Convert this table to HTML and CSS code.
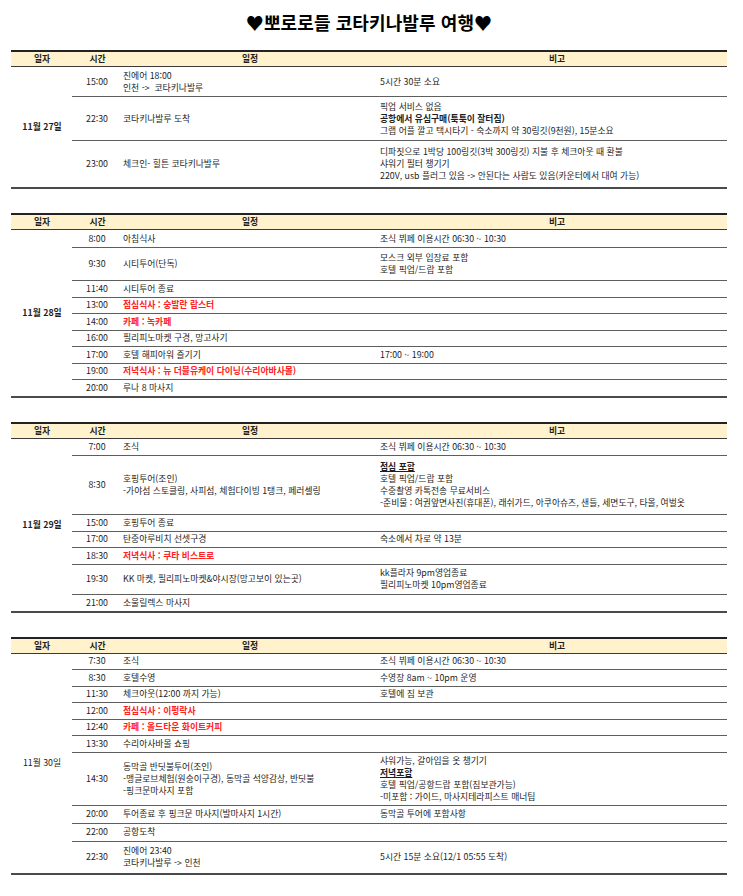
FILE: index.html
```html
<!DOCTYPE html>
<html lang="ko">
<head>
<meta charset="utf-8">
<title>뽀로로들 코타키나발루 여행</title>
<link rel="stylesheet" href="styles.css">
</head>
<body>
<div class="page">
  <h1 class="title">♥뽀로로들 코타키나발루 여행♥</h1>

  <section class="day">
    <div class="head"><div>일자</div><div>시간</div><div>일정</div><div class="hn">비고</div></div>
    <div class="body">
      <div class="date">11월 27일</div>
      <div class="rows">
        <div class="row h30"><div class="t">15:00</div><div class="s">진에어 18:00<br>인천 -&gt;&nbsp; 코타키나발루</div><div class="n">5시간 30분 소요</div></div>
        <div class="row h44"><div class="t">22:30</div><div class="s">코타키나발루 도착</div><div class="n">픽업 서비스 없음<br><b>공항에서 유심구매(툭툭이 잘터짐)</b><br>그랩 어플 깔고 택시타기 - 숙소까지 약 30링깃(9천원), 15분소요</div></div>
        <div class="row h46"><div class="t">23:00</div><div class="s">체크인- 힐튼 코타키나발루</div><div class="n">디파짓으로 1박당 100링깃(3박 300링깃) 지불 후 체크아웃 때 환불<br>샤워기 필터 챙기기<br>220V, usb 플러그 있음 -&gt; 안된다는 사람도 있음(카운터에서 대여 가능)</div></div>
      </div>
    </div>
  </section>

  <section class="day">
    <div class="head"><div>일자</div><div>시간</div><div>일정</div><div class="hn">비고</div></div>
    <div class="body">
      <div class="date">11월 28일</div>
      <div class="rows">
        <div class="row h18"><div class="t">8:00</div><div class="s">아침식사</div><div class="n">조식 뷔페 이용시간 06:30 ~ 10:30</div></div>
        <div class="row h33"><div class="t">9:30</div><div class="s">시티투어(단독)</div><div class="n">모스크 외부 입장료 포함<br>호텔 픽업/드랍 포함</div></div>
        <div class="row h16"><div class="t">11:40</div><div class="s">시티투어 종료</div><div class="n"></div></div>
        <div class="row h16"><div class="t">13:00</div><div class="s red">점심식사 : 숭발란 랍스터</div><div class="n"></div></div>
        <div class="row h16"><div class="t">14:00</div><div class="s red">카페 : 녹카페</div><div class="n"></div></div>
        <div class="row h16"><div class="t">16:00</div><div class="s">필리피노마켓 구경, 망고사기</div><div class="n"></div></div>
        <div class="row h16"><div class="t">17:00</div><div class="s">호텔 해피아워 즐기기</div><div class="n">17:00 ~ 19:00</div></div>
        <div class="row h16"><div class="t">19:00</div><div class="s red">저녁식사 : 뉴 더블유케이 다이닝(수리아바사몰)</div><div class="n"></div></div>
        <div class="row h16"><div class="t">20:00</div><div class="s">루나 8 마사지</div><div class="n"></div></div>
      </div>
    </div>
  </section>

  <section class="day">
    <div class="head"><div>일자</div><div>시간</div><div>일정</div><div class="hn">비고</div></div>
    <div class="body">
      <div class="date">11월 29일</div>
      <div class="rows">
        <div class="row h17"><div class="t">7:00</div><div class="s">조식</div><div class="n">조식 뷔페 이용시간 06:30 ~ 10:30</div></div>
        <div class="row h59"><div class="t">8:30</div><div class="s">호핑투어(조인)<br>-가야섬 스토클링, 사피섬, 체험다이빙 1탱크, 페러셀링</div><div class="n"><b class="u">점심 포함</b><br>호텔 픽업/드랍 포함<br>수중촬영 카톡전송 무료서비스<br>-준비물 : 여권앞면사진(휴대폰), 래쉬가드, 아쿠아슈즈, 샌들, 세면도구, 타올, 여벌옷</div></div>
        <div class="row h16"><div class="t">15:00</div><div class="s">호핑투어 종료</div><div class="n"></div></div>
        <div class="row h16"><div class="t">17:00</div><div class="s">탄중아루비치 선셋구경</div><div class="n">숙소에서 차로 약 13분</div></div>
        <div class="row h16"><div class="t">18:30</div><div class="s red">저녁식사 : 쿠타 비스트로</div><div class="n"></div></div>
        <div class="row h30"><div class="t">19:30</div><div class="s">KK 마켓, 필리피노마켓&amp;야시장(망고보이 있는곳)</div><div class="n">kk플라자 9pm영업종료<br>필리피노마켓 10pm영업종료</div></div>
        <div class="row h16"><div class="t">21:00</div><div class="s">소울릴렉스 마사지</div><div class="n"></div></div>
      </div>
    </div>
  </section>

  <section class="day">
    <div class="head"><div>일자</div><div>시간</div><div>일정</div><div class="hn">비고</div></div>
    <div class="body">
      <div class="date plain">11월 30일</div>
      <div class="rows">
        <div class="row h16"><div class="t">7:30</div><div class="s">조식</div><div class="n">조식 뷔페 이용시간 06:30 ~ 10:30</div></div>
        <div class="row h16"><div class="t">8:30</div><div class="s">호텔수영</div><div class="n">수영장 8am ~ 10pm 운영</div></div>
        <div class="row h16"><div class="t">11:30</div><div class="s">체크아웃(12:00 까지 가능)</div><div class="n">호텔에 짐 보관</div></div>
        <div class="row h16"><div class="t">12:00</div><div class="s red">점심식사 : 이펑락사</div><div class="n"></div></div>
        <div class="row h16"><div class="t">12:40</div><div class="s red">카페 : 올드타운 화이트커피</div><div class="n"></div></div>
        <div class="row h16"><div class="t">13:30</div><div class="s">수리아사바몰 쇼핑</div><div class="n"></div></div>
        <div class="row h53"><div class="t">14:30</div><div class="s">동막골 반딧불투어(조인)<br>-맹글로브체험(원숭이구경), 동막골 석양감상, 반딧불<br>-핑크문마사지 포함</div><div class="n">샤워가능, 갈아입을 옷 챙기기<br><b class="u">저녁포함</b><br>호텔 픽업/공항드랍 포함(짐보관가능)<br>-미포함 : 가이드, 마사지테라피스트 매너팁</div></div>
        <div class="row h18"><div class="t">20:00</div><div class="s">투어종료 후 핑크문 마사지(발마사지 1시간)</div><div class="n">동막골 투어에 포함사항</div></div>
        <div class="row h18"><div class="t">22:00</div><div class="s">공항도착</div><div class="n"></div></div>
        <div class="row h31"><div class="t">22:30</div><div class="s">진에어 23:40<br>코타키나발루 -&gt; 인천</div><div class="n">5시간 15분 소요(12/1 05:55 도착)</div></div>
      </div>
    </div>
  </section>
</div>
</body>
</html>
```

FILE: styles.css
```css
html, body {
  margin: 0;
  padding: 0;
  background: #ffffff;
}

body {
  font-family: "Noto Sans CJK KR", "Noto Sans", sans-serif;
  color: #1e1e1e;
  font-size: 8.8px;
  line-height: 12px;
}

.page {
  width: 716px;
  margin-left: 11px;
  padding-top: 10px;
  display: flex;
  flex-direction: column;
  gap: 24px;
}

.title {
  margin: 0 0 -8px 0;
  height: 24px;
  line-height: 24px;
  font-size: 18px;
  font-weight: 700;
  letter-spacing: 0.1px;
  text-align: center;
  color: #000;
}

.day {
  display: flex;
  flex-direction: column;
}

.head {
  display: grid;
  grid-template-columns: 62px 49px 256px 1fr;
  height: 17px;
  box-sizing: border-box;
  background: #fff2cc;
  border-top: 2px solid #222;
  border-bottom: 1px solid #3a3a3a;
  line-height: 14px;
  font-weight: 700;
  text-align: center;
}

.head .hn {
  padding-left: 9px;
}

.body {
  display: grid;
  grid-template-columns: 61px 1fr;
  border-bottom: 2px solid #4a4a4a;
}

.date {
  align-self: center;
  text-align: center;
  font-weight: 700;
  padding-left: 1px;
}

.date.plain {
  font-weight: 400;
}

.rows {
  display: flex;
  flex-direction: column;
}

.row {
  display: grid;
  grid-template-columns: 50px 256px 1fr;
  align-items: center;
  box-sizing: border-box;
  border-bottom: 1px solid #5e5e5e;
}

.row:last-child {
  border-bottom: none;
}

.t {
  text-align: center;
}

.s {
  padding-left: 1px;
}

.n {
  padding-left: 2px;
}

.red {
  color: #ff2222;
  font-weight: 700;
}

.u {
  text-decoration: underline;
}

.h16 { height: 16.5px; }
.h17 { height: 17px; }
.h18 { height: 18px; }
.h30 { height: 30px; }
.h31 { height: 31px; }
.h33 { height: 33px; }
.h44 { height: 44px; }
.h46 { height: 46px; }
.h53 { height: 53px; }
.h59 { height: 59px; }
.h16:last-child { height: 16px; }
```
